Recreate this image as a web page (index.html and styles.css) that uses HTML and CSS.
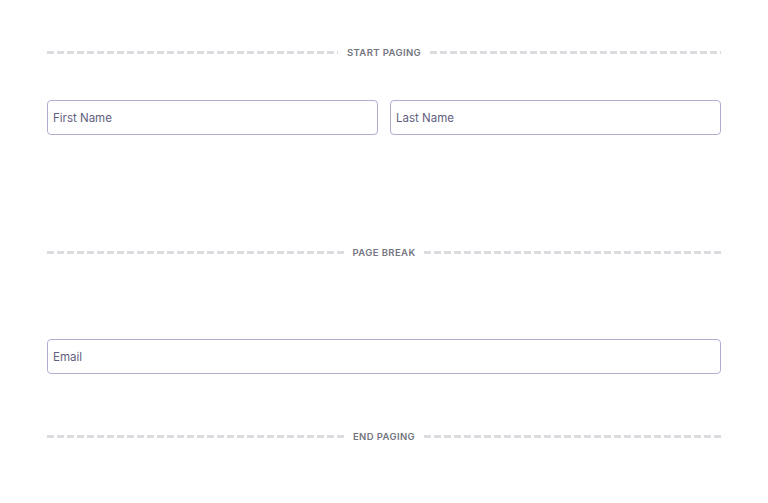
FILE: index.html
```html
<!DOCTYPE html>
<html>
<head>
<meta charset="utf-8">
<link rel="stylesheet" href="styles.css">
</head>
<body>
<div class="form">
  <div class="divider divider-start">
    <span class="dash"></span><span class="label">Start Paging</span><span class="dash"></span>
  </div>
  <div class="row row-names">
    <div class="field">First Name</div>
    <div class="field">Last Name</div>
  </div>
  <div class="divider divider-break">
    <span class="dash"></span><span class="label">Page Break</span><span class="dash"></span>
  </div>
  <div class="row row-email">
    <div class="field">Email</div>
  </div>
  <div class="divider divider-end">
    <span class="dash"></span><span class="label">End Paging</span><span class="dash"></span>
  </div>
</div>
</body>
</html>
```

FILE: styles.css
```css
html, body {
  margin: 0;
  padding: 0;
  background: #ffffff;
}
body {
  font-family: Inter, "Noto Sans", sans-serif;
}
.form {
  width: 674px;
  margin-left: 47px;
  padding-top: 46px;
}
.divider {
  display: flex;
  align-items: center;
  gap: 9px;
  height: 12px;
}
.dash {
  flex: 1;
  height: 3px;
  background: repeating-linear-gradient(90deg, #dcdce0 0 7px, transparent 7px 10px);
}
.label {
  font-size: 9.5px;
  font-weight: 600;
  letter-spacing: 0.4px;
  text-transform: uppercase;
  color: #737580;
  line-height: 12px;
  padding-top: 1px;
}
.row {
  display: flex;
  gap: 12px;
}
.row-names { margin-top: 42px; }
.divider-break { margin-top: 111px; }
.row-email { margin-top: 81px; }
.divider-end { margin-top: 56px; }
.field {
  flex: 1;
  height: 35px;
  box-sizing: border-box;
  border: 1px solid #b0aed2;
  border-radius: 4px;
  padding: 0 5px;
  display: flex;
  align-items: center;
  font-size: 11.5px;
  color: #62607e;
}
```
